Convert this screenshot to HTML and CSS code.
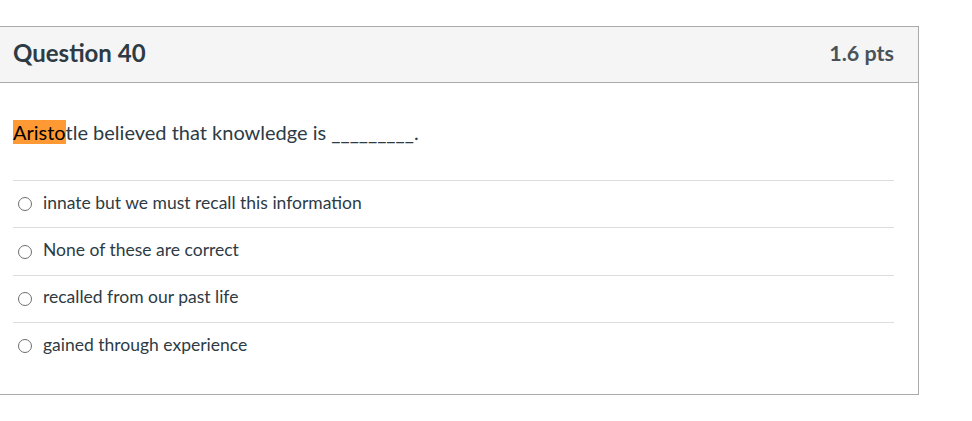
FILE: index.html
```html
<!DOCTYPE html>
<html>
<head>
<meta charset="utf-8">
<link rel="stylesheet" href="styles.css">
</head>
<body>
<div class="card">
  <div class="card-header">
    <h2 class="title">Question 40</h2>
    <div class="points">1.6 pts</div>
  </div>
  <div class="card-body">
    <p class="question"><span class="hl">Aristo</span>tle believed that knowledge is _________.</p>
    <div class="answers">
      <label class="answer"><span class="radio"></span><span class="answer-text">innate but we must recall this information</span></label>
      <label class="answer"><span class="radio"></span><span class="answer-text">None of these are correct</span></label>
      <label class="answer"><span class="radio"></span><span class="answer-text">recalled from our past life</span></label>
      <label class="answer"><span class="radio"></span><span class="answer-text">gained through experience</span></label>
    </div>
  </div>
</div>
</body>
</html>
```

FILE: styles.css
```css
html, body {
  margin: 0;
  padding: 0;
  background: #ffffff;
}
body {
  font-family: Lato, "Liberation Sans", sans-serif;
  color: #2d3b45;
  padding-top: 26px;
}
.card {
  width: 920px;
  margin-left: -1px;
  border: 1px solid #aaaaaa;
  box-sizing: border-box;
}
.card-header {
  display: flex;
  align-items: center;
  justify-content: space-between;
  height: 56px;
  padding: 0 24px 4px 13px;
  background: #f5f5f5;
  border-bottom: 1px solid #aaaaaa;
  box-sizing: border-box;
}
.title {
  margin: 0;
  font-size: 24px;
  font-weight: 700;
  color: #2d3b45;
}
.points {
  font-size: 21.5px;
  font-weight: 700;
  color: #4a5259;
}
.card-body {
  padding: 36px 24px 24px 13px;
}
.question {
  margin: 0 0 35px 0;
  font-size: 20px;
  line-height: 26px;
}
.hl {
  background: #ff9933;
  color: #000000;
}
.answers {
  display: flex;
  flex-direction: column;
}
.answer {
  display: flex;
  align-items: center;
  height: 47.4px;
  padding-bottom: 4px;
  border-top: 1px solid #dddddd;
  box-sizing: border-box;
  font-size: 17.5px;
}
.radio {
  width: 12px;
  height: 12px;
  border: 1.5px solid #6f6f6f;
  border-radius: 50%;
  margin: 4px 11px 0 5px;
  flex: none;
}
```
